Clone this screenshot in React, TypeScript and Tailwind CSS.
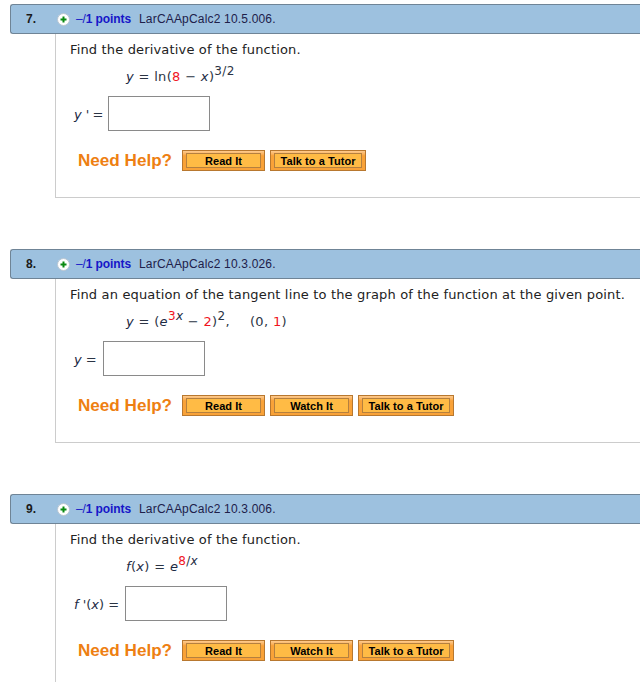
import { ReactNode } from "react";

const sans = "font-['Liberation_Sans',Arial,sans-serif]";
const verdana = "font-['DejaVu_Sans',Verdana,sans-serif]";

function Red({ children }: { children: ReactNode }) {
  return <span className="text-[#f0141e]">{children}</span>;
}

function V({ children }: { children: ReactNode }) {
  return <i className="text-[#1c2a44]">{children}</i>;
}

function Sup({ children }: { children: ReactNode }) {
  return <sup className="relative top-[-6px] align-baseline text-[12px] leading-none">{children}</sup>;
}

function HelpButton({ label, width }: { label: string; width: string }) {
  return (
    <button
      type="button"
      className={`flex h-[21px] items-center justify-center border border-[#b8782f] bg-linear-to-b from-[#fdcb8e] to-[#f9a238] to-[25%] px-[3px] py-[2px] ${width}`}
    >
      <span
        className={`flex h-[15px] w-full items-center justify-center border border-[#b5803f] bg-[#ffbb45] text-[11px] font-bold tracking-[0.05px] text-black ${sans}`}
      >
        {label}
      </span>
    </button>
  );
}

interface QuestionProps {
  num: number;
  code: string;
  prompt: string;
  math: ReactNode;
  answer: ReactNode;
  inputGap: string;
  watch?: boolean;
}

function Question({ num, code, prompt, math, answer, inputGap, watch }: QuestionProps) {
  return (
    <section className="mb-[15px] pl-[10px] pt-[4px]">
      <div className={`flex h-[30px] items-center rounded-l-[3px] border border-r-0 border-[#6f8496] bg-[#9dc1df] text-[12px] ${sans}`}>
        <span className="ml-[15px] w-[31px] font-bold text-[#1a1a1a]">{num}.</span>
        <span className="flex h-[13px] w-[13px] items-center justify-center rounded-full border border-[#b9c6d2] bg-white">
          <svg width="7" height="7" viewBox="0 0 7 7">
            <path d="M3.5 0.5v6M0.5 3.5h6" stroke="#0a8a12" strokeWidth="2" />
          </svg>
        </span>
        <span className="ml-[6px] font-bold tracking-[-0.1px] text-[#1616c8]">
          <span className="font-normal">–/</span>1 points
        </span>
        <span className="ml-[8px] tracking-[0.18px] text-[#20204a]">{code}</span>
      </div>
      <div className={`ml-[45px] h-[164px] border-b border-l border-[#cccccc] pl-[14px] pt-[7px] text-[13px] text-[#222222] ${verdana}`}>
        <p className="h-[18px] whitespace-nowrap leading-[18px] tracking-[0.16px]">{prompt}</p>
        <div className="mt-[9px] h-[18px] pl-[56px] leading-[18px] tracking-[0.33px] text-[#2b3444]">{math}</div>
        <div className="mt-[10px] flex h-[35px] items-center pl-[4px] text-[#2b3444]">
          <span className={`pt-[3px] ${inputGap}`}>{answer}</span>
          <input
            aria-label="answer"
            className="h-[35px] w-[102px] border border-[#8a8a8a] bg-white"
          />
        </div>
        <div className="mt-[17px] flex items-center pl-[8px]">
          <span className={`mr-[10px] text-[17.1px] font-bold text-[#ee7f12] ${sans}`}>Need Help?</span>
          <div className="flex gap-[5px]">
            <HelpButton label="Read It" width="w-[83px]" />
            {watch && <HelpButton label="Watch It" width="w-[83px]" />}
            <HelpButton label="Talk to a Tutor" width="w-[96px]" />
          </div>
        </div>
      </div>
      <div className="h-[32px]" />
    </section>
  );
}

export default function App() {
  return (
    <div className="h-[682px] w-[640px] overflow-hidden bg-white">
      <Question
        num={7}
        code="LarCAApCalc2 10.5.006."
        prompt="Find the derivative of the function."
        math={
          <>
            <V>y</V> = ln(<Red>8</Red> − <V>x</V>)<Sup>3/2</Sup>
          </>
        }
        answer={
          <>
            <V>y</V> '<span className="ml-[3px]">=</span>
          </>
        }
        inputGap="w-[34px]"
      />
      <Question
        num={8}
        code="LarCAApCalc2 10.3.026."
        prompt="Find an equation of the tangent line to the graph of the function at the given point."
        math={
          <>
            <V>y</V> = (<V>e</V>
            <Sup>
              <Red>3</Red>
              <V>x</V>
            </Sup>{" "}
            − <Red>2</Red>)<Sup>2</Sup>,
            <span className="ml-[20px]">
              (0, <Red>1</Red>)
            </span>
          </>
        }
        answer={
          <>
            <V>y</V> =
          </>
        }
        inputGap="w-[29px]"
        watch
      />
      <Question
        num={9}
        code="LarCAApCalc2 10.3.006."
        prompt="Find the derivative of the function."
        math={
          <>
            <V>f</V>(<V>x</V>) = <V>e</V>
            <Sup>
              <Red>8</Red>/<V>x</V>
            </Sup>
          </>
        }
        answer={
          <>
            <V>f</V> '(<V>x</V>) =
          </>
        }
        inputGap="w-[51px]"
        watch
      />
    </div>
  );
}
